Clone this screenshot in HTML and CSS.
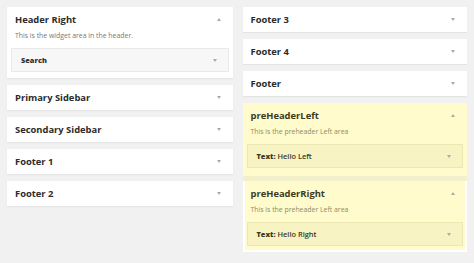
FILE: index.html
```html
<!DOCTYPE html>
<html lang="en">
<head>
    <meta charset="UTF-8">
    <title>Widgets</title>
    <link rel="stylesheet" href="styles.css">
</head>
<body>
    <div class="column left">
        <div class="widget open">
            <div class="widget-top">
                <h3>Header Right</h3>
                <span class="arrow up"></span>
            </div>
            <p class="desc">This is the widget area in the header.</p>
            <div class="inner">
                <span><b>Search</b></span>
                <span class="arrow"></span>
            </div>
        </div>
        <div class="widget">
            <div class="widget-top"><h3>Primary Sidebar</h3><span class="arrow"></span></div>
        </div>
        <div class="widget">
            <div class="widget-top"><h3>Secondary Sidebar</h3><span class="arrow"></span></div>
        </div>
        <div class="widget">
            <div class="widget-top"><h3>Footer 1</h3><span class="arrow"></span></div>
        </div>
        <div class="widget">
            <div class="widget-top"><h3>Footer 2</h3><span class="arrow"></span></div>
        </div>
    </div>

    <div class="column right">
        <div class="widget">
            <div class="widget-top"><h3>Footer 3</h3><span class="arrow"></span></div>
        </div>
        <div class="widget">
            <div class="widget-top"><h3>Footer 4</h3><span class="arrow"></span></div>
        </div>
        <div class="widget">
            <div class="widget-top"><h3>Footer</h3><span class="arrow"></span></div>
        </div>
        <div class="highlight">
            <div class="widget open yellow first">
                <div class="widget-top">
                    <h3>preHeaderLeft</h3>
                    <span class="arrow up"></span>
                </div>
                <p class="desc">This is the preheader Left area</p>
                <div class="inner">
                    <span><b>Text:</b> Hello Left</span>
                    <span class="arrow"></span>
                </div>
            </div>
            <div class="widget open yellow last">
                <div class="widget-top">
                    <h3>preHeaderRight</h3>
                    <span class="arrow up"></span>
                </div>
                <p class="desc">This is the preheader Left area</p>
                <div class="inner">
                    <span><b>Text:</b> Hello Right</span>
                    <span class="arrow"></span>
                </div>
            </div>
        </div>
    </div>
</body>
</html>
```

FILE: styles.css
```css
body {
    margin: 0;
    padding: 7px;
    display: flex;
    gap: 10px;
    background-color: #f1f1f1;
    font-family: "Open Sans", sans-serif;
    color: #222;
}

.column {
    display: flex;
    flex-direction: column;
    gap: 7px;
}

.left {
    width: 226px;
}

.right {
    width: 225px;
}

.widget {
    background: #fff;
    box-shadow: 0 1px 1px rgba(0, 0, 0, 0.05);
}

.widget-top {
    display: flex;
    align-items: center;
    justify-content: space-between;
    height: 25px;
    padding: 0 12px 0 8px;
}

.open .widget-top {
    height: 24px;
}

h3 {
    margin: 0;
    font-size: 9.4px;
    font-weight: 700;
    color: #2b2b2b;
}

.arrow {
    width: 0;
    height: 0;
    border-left: 2px solid transparent;
    border-right: 2px solid transparent;
    border-top: 3px solid #aaa;
}

.arrow.up {
    border-top: none;
    border-bottom: 3px solid #aaa;
}

.desc {
    margin: 0 8px;
    height: 17px;
    font-size: 6.9px;
    color: #777;
}

.inner {
    display: flex;
    align-items: center;
    justify-content: space-between;
    height: 22px;
    margin: 0 4px 6px 4px;
    padding: 0 11px 0 9px;
    background: #f7f7f7;
    border: 1px solid #eaeaea;
    font-size: 7.4px;
    font-weight: 600;
    color: #333;
}

.highlight {
    display: flex;
    flex-direction: column;
    gap: 5px;
    background: #f2efcb;
}

.yellow {
    background: #fffbcc;
    box-shadow: none;
}

.yellow h3 {
    color: #3c3a1e;
}

.yellow .desc {
    color: #8e8b62;
}

.yellow .inner {
    background: #f7f3c2;
    border-color: #ece8b4;
    color: #3c3a1e;
}

.yellow.first .inner {
    margin-bottom: 8px;
}

.yellow.last {
    box-shadow: inset 2px 0 #fff, inset -2px 0 #fff, inset 0 -2px #fff;
}
```
